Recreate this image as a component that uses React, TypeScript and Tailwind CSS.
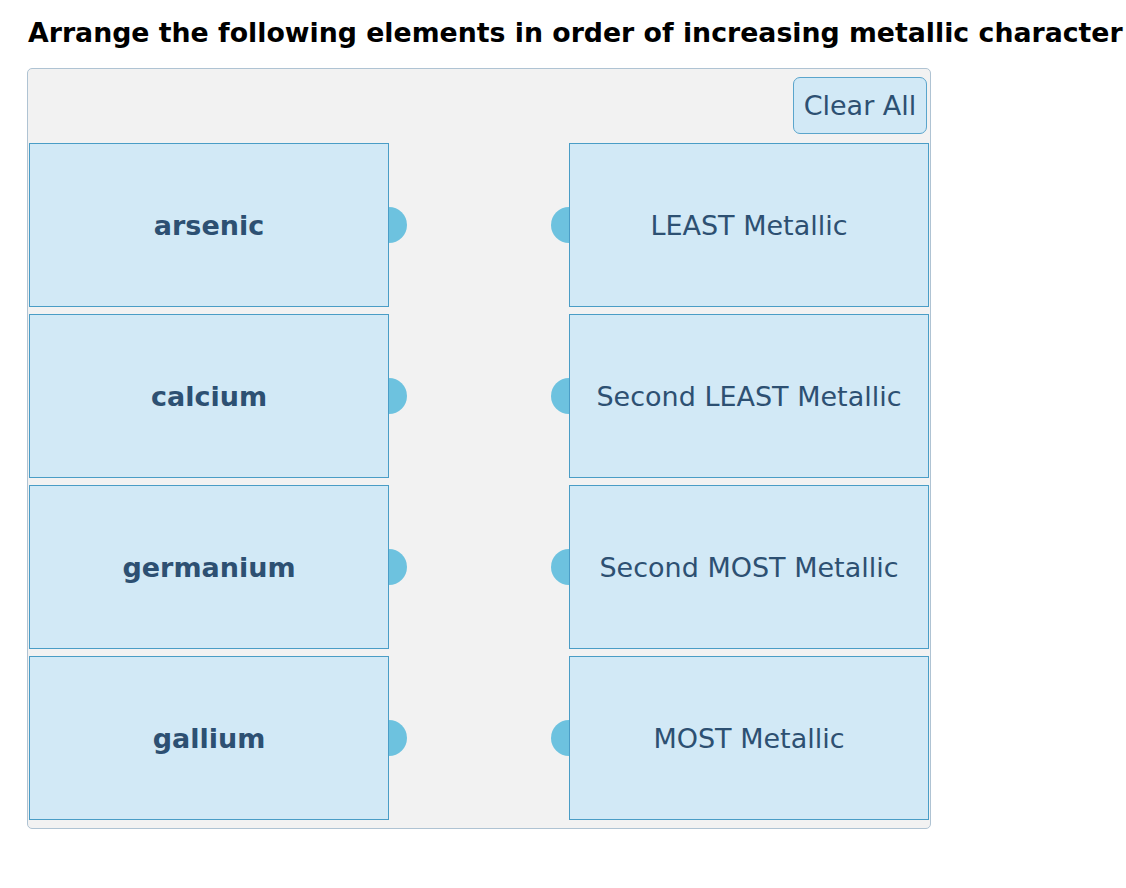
import React from "react";

const elements = ["arsenic", "calcium", "germanium", "gallium"];
const targets = ["LEAST Metallic", "Second LEAST Metallic", "Second MOST Metallic", "MOST Metallic"];

function Row({ left, right }: { left: string; right: string }) {
  return (
    <div className="flex justify-between">
      <div className="relative flex h-[164px] w-[360px] items-center justify-center border border-[#4a9dc6] bg-[#d2e9f6]">
        <span className="text-[27px] font-bold leading-none text-[#2d5072]">{left}</span>
        <div className="absolute right-[-19px] top-[63px] h-[36px] w-[18px] rounded-r-full bg-[#6dc2df]" />
      </div>
      <div className="relative flex h-[164px] w-[360px] items-center justify-center border border-[#4a9dc6] bg-[#d2e9f6]">
        <span className="text-[27px] leading-none text-[#2d5072]">{right}</span>
        <div className="absolute left-[-19px] top-[63px] h-[36px] w-[18px] rounded-l-full bg-[#6dc2df]" />
      </div>
    </div>
  );
}

export default function App() {
  return (
    <div className="min-h-screen bg-white pt-[14px] pl-[27px]" style={{ fontFamily: '"DejaVu Sans", Verdana, sans-serif' }}>
      <h1 className="whitespace-nowrap pl-px text-[26.75px] font-bold leading-[38px] text-black">
        Arrange the following elements in order of increasing metallic character
      </h1>
      <div className="mt-[16px] w-[904px] rounded-[5px] border border-[#afc3d3] bg-[#f2f2f2] pb-[8px] pl-px pr-px">
        <div className="flex justify-end pt-[8px] pr-[2px]">
          <button className="h-[57px] w-[134px] rounded-[7px] border border-[#5aa5cc] bg-[#d2e9f6] text-[27px] leading-none text-[#2d5072]">
            Clear All
          </button>
        </div>
        <div className="mt-[9px] flex flex-col gap-[7px]">
          {elements.map((e, i) => (
            <Row key={e} left={e} right={targets[i]} />
          ))}
        </div>
      </div>
    </div>
  );
}
